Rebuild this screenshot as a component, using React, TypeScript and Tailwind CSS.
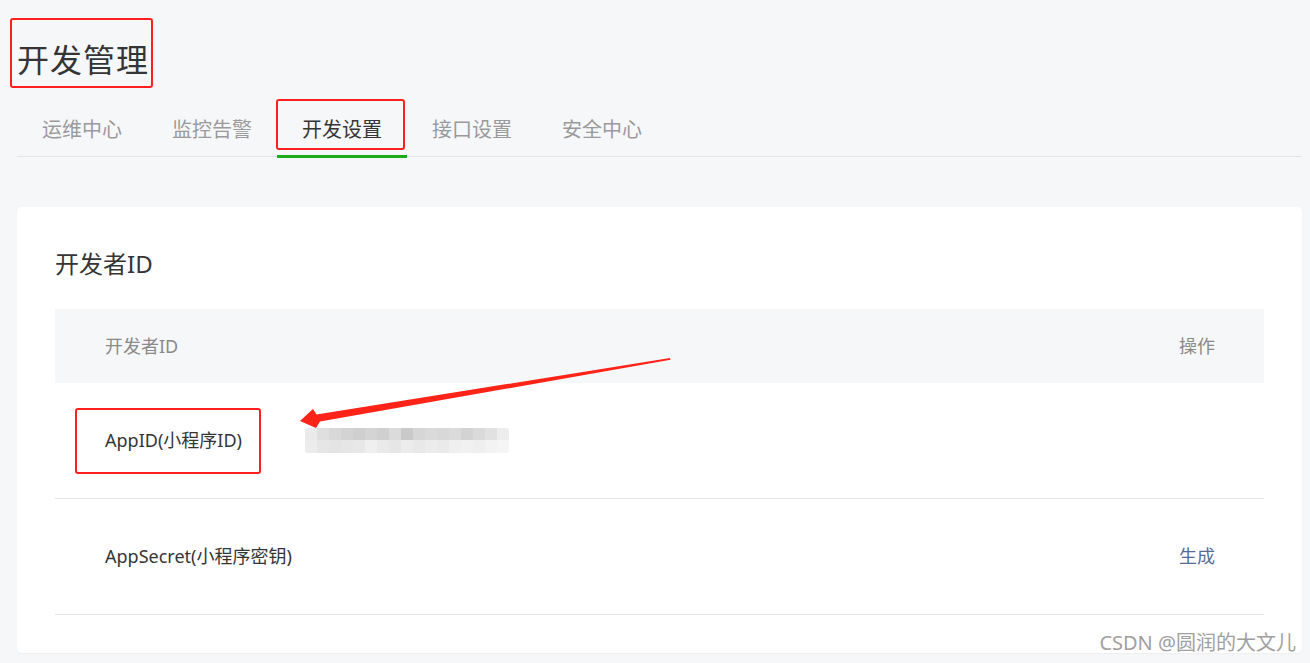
import React from "react";

const tabs = ["运维中心", "监控告警", "开发设置", "接口设置", "安全中心"];

// mosaic blur that hides the real AppID
const mosaicTop = [
  "bg-[#e8e8e8]", "bg-[#dcdcdc]", "bg-[#d4d4d4]", "bg-[#cfcfcf]", "bg-[#cacaca]",
  "bg-[#d0d0d0]", "bg-[#cccccc]", "bg-[#d8d8d8]", "bg-[#c4c4c4]", "bg-[#d2d2d2]",
  "bg-[#d6d6d6]", "bg-[#d4d4d4]", "bg-[#d8d8d8]", "bg-[#cfcfcf]", "bg-[#d6d6d6]",
  "bg-[#dedede]", "bg-[#ececec]",
];
const mosaicBottom = [
  "bg-[#ebebeb]", "bg-[#e4e4e4]", "bg-[#e2e2e2]", "bg-[#e4e4e4]", "bg-[#e6e6e6]",
  "bg-[#eeeeee]", "bg-[#e8e8e8]", "bg-[#e4e4e4]", "bg-[#ebebeb]", "bg-[#e6e6e6]",
  "bg-[#ebebeb]", "bg-[#e8e8e8]", "bg-[#eeeeee]", "bg-[#f0f0f0]", "bg-[#eeeeee]",
  "bg-[#f2f2f2]", "bg-[#f4f4f4]",
];

const font = "font-['Noto_Sans','Noto_Sans_CJK_SC',sans-serif]";

export default function App() {
  return (
    <div
      className={`relative min-h-[663px] w-full overflow-hidden bg-[#f6f7f9] pl-[17px] pr-[8px] text-[#353535] ${font}`}
    >
      {/* page title */}
      <div className="flex pt-[44px]">
        <h1 className="relative text-[32px] font-normal leading-[32px] tracking-[1px]">
          开发管理
          <span className="pointer-events-none absolute left-[-7px] top-[-26px] h-[70px] w-[143px] rounded-[3px] border-2 border-[#ff1f1f]" />
        </h1>
      </div>

      {/* tabs */}
      <div className="mt-[28px] flex border-b border-[#e3e4e6]">
        {tabs.map((t) => {
          const active = t === "开发设置";
          return (
            <div
              key={t}
              className={`relative flex h-[52px] w-[130px] items-center justify-center text-[20px] leading-[20px] ${
                active ? "text-[#353535]" : "text-[#9a9a9a]"
              }`}
            >
              {t}
              {active && (
                <>
                  <span className="absolute bottom-[-2px] left-0 h-[3px] w-[130px] bg-[#1aad19]" />
                  <span className="pointer-events-none absolute left-[-1px] top-[-5px] h-[51px] w-[129px] rounded-[3px] border-2 border-[#ff1f1f]" />
                </>
              )}
            </div>
          );
        })}
      </div>

      {/* card */}
      <div className="mt-[50px] rounded-[5px] bg-white px-[38px] pb-[38px] pt-[45px] shadow-[0_1px_2px_rgba(0,0,0,0.04)]">
        <h2 className="text-[24px] font-normal leading-[24px]">开发者ID</h2>

        <div className="mt-[33px]">
          <div className="flex h-[74px] items-center justify-between bg-[#f6f7f9] pl-[50px] pr-[49px] text-[18px] text-[#8a8a8a]">
            <span>开发者ID</span>
            <span>操作</span>
          </div>

          <div className="flex h-[116px] items-center border-b border-[#e5e5e5] pl-[50px] pr-[49px] text-[18px]">
            <span className="relative w-[200px]">
              AppID(小程序ID)
              <span className="pointer-events-none absolute left-[-30px] top-1/2 h-[66px] w-[186px] -translate-y-1/2 rounded-[3px] border-2 border-[#ff1f1f]" />
            </span>
            <div className="flex flex-col overflow-hidden rounded-[3px] opacity-90">
              <div className="flex">
                {mosaicTop.map((c, i) => (
                  <span key={i} className={`h-[12px] w-[12px] ${c}`} />
                ))}
              </div>
              <div className="flex">
                {mosaicBottom.map((c, i) => (
                  <span key={i} className={`h-[13px] w-[12px] ${c}`} />
                ))}
              </div>
            </div>
          </div>

          <div className="flex h-[116px] items-center justify-between border-b border-[#e5e5e5] pl-[50px] pr-[49px] text-[18px]">
            <span>AppSecret(小程序密钥)</span>
            <a className="cursor-pointer text-[#576b95]">生成</a>
          </div>
        </div>
      </div>

      {/* annotation arrow */}
      <svg
        className="pointer-events-none absolute left-0 top-0"
        width="1310"
        height="663"
        viewBox="0 0 1310 663"
      >
        <polygon
          points="300,421 313,409 316.5,414.5 670,358 670.5,359.8 320,421.5 316,428"
          fill="#ff2318"
        />
      </svg>

      {/* watermark */}
      <span className="pointer-events-none absolute right-[14px] top-[633px] text-[20px] leading-[20px] text-[#a0a0a0] [text-shadow:0_0_1px_#fff]">
        CSDN @圆润的大文儿
      </span>
    </div>
  );
}
